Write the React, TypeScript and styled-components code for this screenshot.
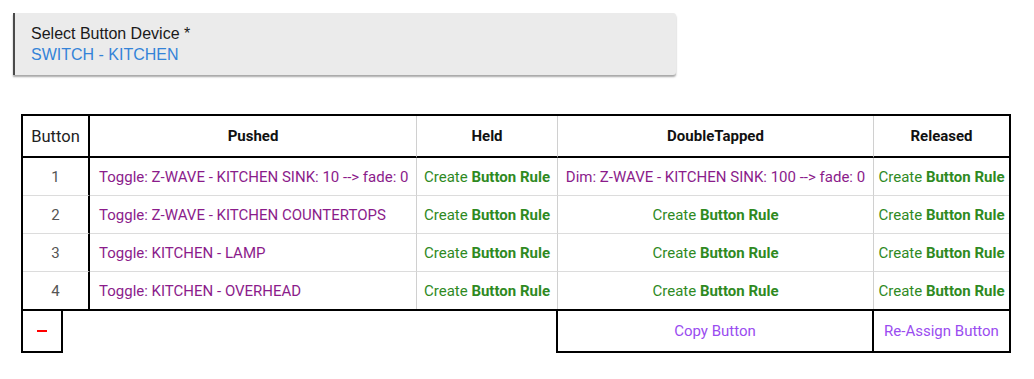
import React from 'react'
import styled, { createGlobalStyle } from 'styled-components'

const GlobalStyle = createGlobalStyle`
    html, body {
        margin: 0;
        padding: 0;
        background: #ffffff;
    }
    body {
        font-family: "Roboto", "Liberation Sans", sans-serif;
    }
`

const Page = styled.div`
    padding: 13px 0 0 13px;
`

const DeviceCard = styled.div`
    box-sizing: border-box;
    width: 663px;
    height: 62px;
    padding: 10px 16px;
    background: #ebebeb;
    border-left: 2px solid #4a4a4a;
    border-radius: 0 3px 3px 0;
    box-shadow: 0 2px 2px rgba(0, 0, 0, 0.35);
    font-family: "Liberation Sans", Arial, sans-serif;
    font-size: 16px;
    line-height: 21px;
`

const CardLabel = styled.div`
    color: #1a1a1a;
`

const CardValue = styled.div`
    color: #3483d8;
`

const TableArea = styled.div`
    margin: 39px 0 0 8px;
    width: 990px;
`

const columns = '67px 327px 141px 316px 135px'

const Grid = styled.div`
    box-sizing: border-box;
    width: 990px;
    display: grid;
    grid-template-columns: ${columns};
    border: 2px solid #000;
`

interface CellProps {
    $align?: 'left' | 'center'
    $first?: boolean
    $last?: boolean
    $lastRow?: boolean
}

const HeadCell = styled.div<CellProps>`
    height: 40px;
    display: flex;
    align-items: center;
    justify-content: center;
    border-bottom: 2px solid #000;
    border-right: ${({ $first, $last }) => ($first ? '2px solid #000' : $last ? 'none' : '1px solid #d0d0d0')};
    font-size: 15px;
    font-weight: 700;
    color: #111;
`

const ButtonHead = styled(HeadCell)`
    font-size: 16.5px;
    font-weight: 400;
    color: #222;
`

const Cell = styled.div<CellProps>`
    height: 37px;
    display: flex;
    align-items: center;
    justify-content: ${({ $align }) => ($align === 'left' ? 'flex-start' : 'center')};
    padding: 0 ${({ $align }) => ($align === 'left' ? '9px' : '0')};
    border-bottom: ${({ $lastRow }) => ($lastRow ? 'none' : '1px solid #dcdcdc')};
    border-right: ${({ $first, $last }) => ($first ? '2px solid #000' : $last ? 'none' : '1px solid #d0d0d0')};
    font-size: 15px;
    white-space: nowrap;
`

const Num = styled.span`
    color: #555;
`

const Action = styled.span`
    color: #8b1c8b;
`

const RuleLink = styled.span`
    color: #2f8a1f;
    b {
        font-weight: 700;
    }
`

const Footer = styled.div`
    display: grid;
    grid-template-columns: 42px 1fr 316px 139px;
    height: 42px;
`

const MinusBox = styled.div`
    border: 2px solid #000;
    border-top: none;
    display: flex;
    align-items: center;
    justify-content: center;
`

const MinusBar = styled.span`
    width: 10px;
    height: 2px;
    background: #ff0000;
`

const FootButton = styled.div<{ $closeRight?: boolean }>`
    display: flex;
    align-items: center;
    justify-content: center;
    border-left: 2px solid #000;
    border-bottom: 2px solid #000;
    border-right: ${({ $closeRight }) => ($closeRight ? '2px solid #000' : 'none')};
    font-size: 15px;
    color: #9a4cf0;
`

type Entry = { kind: 'action'; text: string } | { kind: 'rule' }

const rows: { num: number; pushed: string; held: Entry; double: Entry; released: Entry }[] = [
    {
        num: 1,
        pushed: 'Toggle: Z-WAVE - KITCHEN SINK: 10 --> fade: 0',
        held: { kind: 'rule' },
        double: { kind: 'action', text: 'Dim: Z-WAVE - KITCHEN SINK: 100 --> fade: 0' },
        released: { kind: 'rule' },
    },
    { num: 2, pushed: 'Toggle: Z-WAVE - KITCHEN COUNTERTOPS', held: { kind: 'rule' }, double: { kind: 'rule' }, released: { kind: 'rule' } },
    { num: 3, pushed: 'Toggle: KITCHEN - LAMP', held: { kind: 'rule' }, double: { kind: 'rule' }, released: { kind: 'rule' } },
    { num: 4, pushed: 'Toggle: KITCHEN - OVERHEAD', held: { kind: 'rule' }, double: { kind: 'rule' }, released: { kind: 'rule' } },
]

const renderEntry = (e: Entry) =>
    e.kind === 'action' ? (
        <Action>{e.text}</Action>
    ) : (
        <RuleLink>
            Create <b>Button Rule</b>
        </RuleLink>
    )

export default function App() {
    return (
        <>
            <GlobalStyle />
            <Page>
                <DeviceCard>
                    <CardLabel>Select Button Device *</CardLabel>
                    <CardValue>SWITCH - KITCHEN</CardValue>
                </DeviceCard>
                <TableArea>
                    <Grid>
                        <ButtonHead $first>Button</ButtonHead>
                        <HeadCell>Pushed</HeadCell>
                        <HeadCell>Held</HeadCell>
                        <HeadCell>DoubleTapped</HeadCell>
                        <HeadCell $last>Released</HeadCell>
                        {rows.map((r, i) => {
                            const lastRow = i === rows.length - 1
                            return (
                                <React.Fragment key={r.num}>
                                    <Cell $first $lastRow={lastRow}>
                                        <Num>{r.num}</Num>
                                    </Cell>
                                    <Cell $align="left" $lastRow={lastRow}>
                                        <Action>{r.pushed}</Action>
                                    </Cell>
                                    <Cell $lastRow={lastRow}>{renderEntry(r.held)}</Cell>
                                    <Cell $lastRow={lastRow}>{renderEntry(r.double)}</Cell>
                                    <Cell $last $lastRow={lastRow}>{renderEntry(r.released)}</Cell>
                                </React.Fragment>
                            )
                        })}
                    </Grid>
                    <Footer>
                        <MinusBox>
                            <MinusBar />
                        </MinusBox>
                        <div />
                        <FootButton>Copy Button</FootButton>
                        <FootButton $closeRight>Re-Assign Button</FootButton>
                    </Footer>
                </TableArea>
            </Page>
        </>
    )
}
